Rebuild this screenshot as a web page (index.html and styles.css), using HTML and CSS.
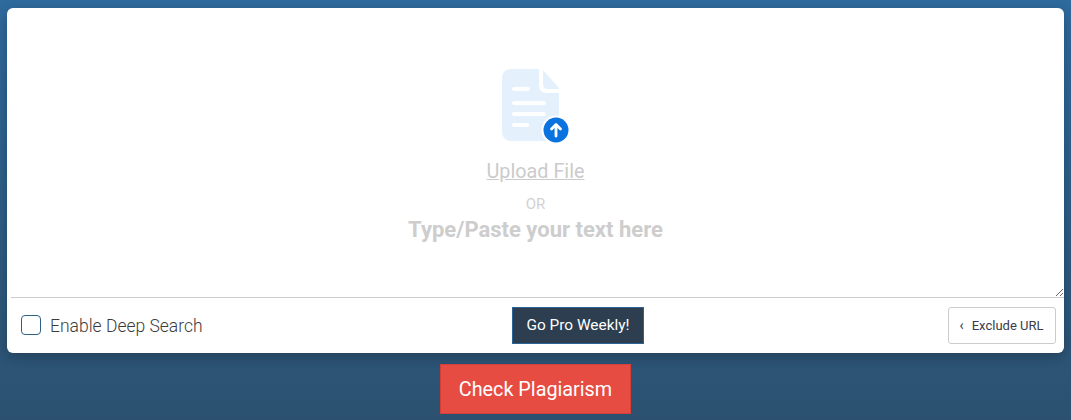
FILE: index.html
```html
<!DOCTYPE html>
<html lang="en">
<head>
  <meta charset="UTF-8" />
  <meta name="viewport" content="width=device-width, initial-scale=1.0"/>
  <title>Plagiarism Checker</title>
  <link rel="stylesheet" href="styles.css">
</head>
<body>
  <div class="card">
    <div class="text-area">
      <textarea class="input"></textarea>

      <!-- upload prompt sits over the textarea -->
      <div class="prompt">
        <svg class="file-icon" width="68" height="74" viewBox="0 0 68 74">
          <path d="M10 0H37V16Q37 24 45 24H57V62Q57 72 47 72H10Q0 72 0 62V10Q0 0 10 0Z" fill="#e4f0fb"/>
          <path d="M41 1L57 19V20H46Q41 20 41 15Z" fill="#e4f0fb"/>
          <rect x="10" y="18" width="18" height="4" rx="2" fill="#fff"/>
          <rect x="10" y="32" width="34" height="4" rx="2" fill="#fff"/>
          <rect x="10" y="43" width="34" height="4" rx="2" fill="#fff"/>
          <rect x="10" y="54" width="17" height="4" rx="2" fill="#fff"/>
          <circle cx="54" cy="61" r="14.5" fill="#fff"/>
          <circle cx="54" cy="61" r="12.5" fill="#0b73e0"/>
          <path d="M54 67V56M49.5 60L54 55.5L58.5 60" fill="none" stroke="#fff" stroke-width="2.8" stroke-linecap="round" stroke-linejoin="round"/>
        </svg>
        <a class="upload" href="#">Upload File</a>
        <span class="or">OR</span>
        <span class="hint">Type/Paste your text here</span>
      </div>
    </div>

    <div class="footer">
      <label class="deep-search">
        <span class="check"></span>
        Enable Deep Search
      </label>
      <button class="go-pro">Go Pro Weekly!</button>
      <button class="exclude"><span class="chev">‹</span>Exclude URL</button>
    </div>
  </div>

  <div class="actions">
    <button class="check-btn">Check Plagiarism</button>
  </div>
</body>
</html>
```

FILE: styles.css
```css
* {
  box-sizing: border-box;
}
html, body {
  height: 100%;
}
body {
  margin: 0;
  padding: 8px 7px 0;
  font-family: Roboto, sans-serif;
  background: linear-gradient(180deg, #2f6b9e 0%, #2c5170 100%);
  overflow: hidden;
}
.card {
  height: 345px;
  padding-left: 4px;
  background: white;
  border-radius: 6px;
  box-shadow: 0 4px 14px rgba(0,0,0,0.25);
}
.text-area {
  position: relative;
  height: 290px;
  border-bottom: 1px solid #ccc;
}
.input {
  display: block;
  width: 100%;
  height: 289px;
  border: 0;
  outline: 0;
  padding: 0;
  background: transparent;
  resize: both;
}
.prompt {
  position: absolute;
  top: 61px;
  left: -4px;
  right: 0;
  display: flex;
  flex-direction: column;
  align-items: center;
  pointer-events: none;
}
.file-icon {
  display: block;
  margin-left: 1px;
}
.upload {
  margin-top: 17px;
  font-size: 19.8px;
  font-weight: 400;
  line-height: 24px;
  color: #cbcbcb;
}
.or {
  margin-top: 12px;
  font-size: 15px;
  font-weight: 400;
  line-height: 16px;
  color: #d2d2d2;
}
.hint {
  margin-top: 5px;
  font-size: 22px;
  font-weight: 700;
  line-height: 26px;
  color: #cdcdcd;
}
.footer {
  display: grid;
  grid-template-columns: 491px 132px 1fr;
  align-items: center;
  height: 55px;
  padding: 0 8px 1px 10px;
}
.deep-search {
  display: flex;
  align-items: center;
  gap: 9px;
  padding-top: 1px;
  font-size: 17.5px;
  font-weight: 300;
  color: #3c3c3c;
}
.check {
  width: 20px;
  height: 20px;
  margin-top: -1px;
  border: 1.5px solid #2f6288;
  border-radius: 4px;
}
.go-pro {
  height: 37px;
  padding: 0;
  background: #2c3e50;
  border: 1px solid #2a6496;
  color: white;
  font-family: inherit;
  font-size: 15.4px;
  font-weight: 400;
}
.exclude {
  justify-self: end;
  width: 108px;
  height: 37px;
  padding: 0 1px 0 0;
  background: white;
  border: 1px solid #ccc;
  border-radius: 3px;
  color: #3a3a4a;
  font-family: inherit;
  font-size: 13px;
}
.chev {
  margin-right: 8px;
  font-size: 14px;
}
.actions {
  display: flex;
  justify-content: center;
  margin-top: 11px;
}
.check-btn {
  width: 191px;
  height: 50px;
  background: #e74c43;
  border: 1px solid #d43f3a;
  color: white;
  font-family: inherit;
  font-size: 19.8px;
}
```
